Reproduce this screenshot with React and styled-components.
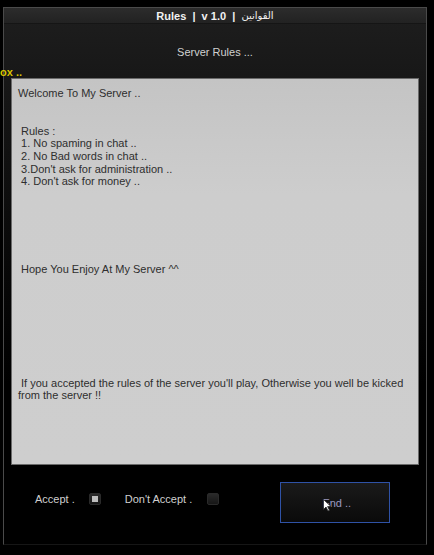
import React from 'react'
import styled, { createGlobalStyle } from 'styled-components';

const GlobalStyle = createGlobalStyle`
    html, body {
        margin: 0;
        padding: 0;
        background: #000;
        font-family: "Liberation Sans", "DejaVu Sans", sans-serif;
    }
`
const Screen = styled.div`
    width: 434px;
    height: 555px;
    padding: 7px 0 0 3px;
    box-sizing: border-box;
    overflow: hidden;
    position: relative;
`
const Window = styled.div`
    width: 424px;
    height: 538px;
    box-sizing: border-box;
    border: 1px solid #4a4a4a;
    border-bottom-color: #161616;
    background: linear-gradient(to bottom, #1e1e1e 0%, #141414 20%, #070707 50%, #000 70%);
    display: flex;
    flex-direction: column;
`
const TitleBar = styled.div`
    height: 15px;
    background: linear-gradient(to bottom, #2c2c2c, #222);
    border-bottom: 1px solid #151515;
    display: flex;
    align-items: center;
    justify-content: center;
    color: #f2f2f2;
    font-size: 11px;
    font-weight: bold;
    white-space: pre;
`
const Arabic = styled.span`
    font-family: "DejaVu Sans", sans-serif;
    font-weight: normal;
    font-size: 10px;
`
const Heading = styled.div`
    height: 54px;
    display: flex;
    align-items: center;
    justify-content: center;
    color: #d0d0d0;
    font-size: 11px;
    padding-top: 2px;
    box-sizing: border-box;
`
const Memo = styled.div`
    margin: 0 7px;
    height: 387px;
    box-sizing: border-box;
    border: 1px solid #6a6a6a;
    background: linear-gradient(to bottom, #c4c4c4 0%, #cdcdcd 30%, #cecece 100%);
    color: #2e2e2e;
    font-size: 11px;
    line-height: 12.6px;
    padding: 8px 6px;
    white-space: pre-wrap;
`
const Footer = styled.div`
    flex: 1;
    display: flex;
    align-items: flex-start;
    padding: 17px 0 0 31px;
`
const Choices = styled.div`
    display: flex;
    align-items: center;
    margin-top: 11px;
`
const Label = styled.span`
    color: #cfcfcf;
    font-size: 11px;
    margin-right: ${p => p.gap}px;
`
const Check = styled.span`
    width: 12px;
    height: 12px;
    box-sizing: border-box;
    border: 1px solid #2a2a2a;
    border-radius: 2px;
    background: linear-gradient(to bottom, #2a2a2a, #161616);
    display: flex;
    align-items: center;
    justify-content: center;
    margin-right: ${p => p.gap || 0}px;
    &::after {
        content: '';
        width: 6px;
        height: 6px;
        background: ${p => (p.checked ? '#bdbdbd' : 'transparent')};
    }
`
const EndButton = styled.button`
    margin-left: 61px;
    width: 110px;
    height: 41px;
    border: 1px solid #2f52a6;
    background: linear-gradient(to bottom, #1a1a1a, #0a0a0a);
    color: #9a9ac4;
    font-family: inherit;
    font-size: 11px;
    position: relative;
    padding: 0 0 0 3px;
`
const Cursor = styled.svg`
    position: absolute;
    left: 42px;
    top: 16px;
`
const Cut = styled.span`
    position: absolute;
    left: 0;
    top: 66px;
    color: #d8c400;
    font-size: 11px;
    font-weight: bold;
    white-space: nowrap;
`

const text = `Welcome To My Server ..


 Rules :
 1. No spaming in chat ..
 2. No Bad words in chat ..
 3.Don't ask for administration ..
 4. Don't ask for money ..






 Hope You Enjoy At My Server ^^








 If you accepted the rules of the server you'll play, Otherwise you well be kicked from the server !!`

const App = () => {
    return (
        <Screen>
            <GlobalStyle />
            <Cut>ox ..</Cut>
            <Window>
                <TitleBar>
                    Rules  |  v 1.0  |  <Arabic>القوانين</Arabic>
                </TitleBar>
                <Heading>Server Rules ...</Heading>
                <Memo>{text}</Memo>
                <Footer>
                    <Choices>
                        <Label gap={14}>Accept .</Label>
                        <Check checked gap={24} />
                        <Label gap={15}>Don't Accept .</Label>
                        <Check />
                    </Choices>
                    <EndButton>
                        End ..
                        <Cursor width="9" height="13" viewBox="0 0 9 13">
                            <path d="M0.5 0.5 L0.5 10.5 L3 8 L5 12 L6.5 11.3 L4.6 7.5 L8 7.5 Z" fill="#fff" stroke="#222" strokeWidth="0.8" />
                        </Cursor>
                    </EndButton>
                </Footer>
            </Window>
        </Screen>
    )
}

export default App
